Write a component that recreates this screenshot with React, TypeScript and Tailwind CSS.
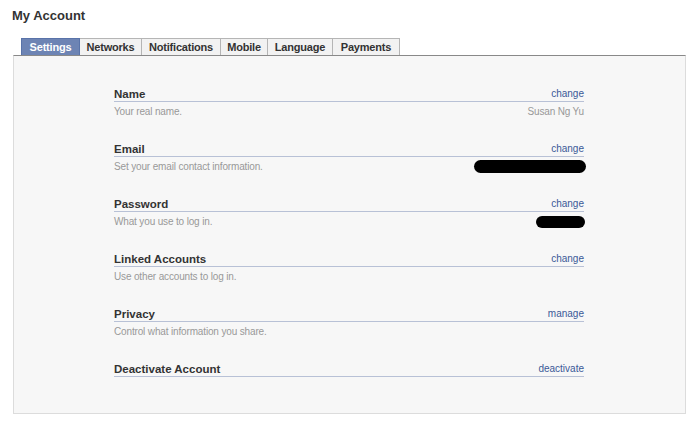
const tabs = [
  { label: 'Settings', w: 'w-[59px]' },
  { label: 'Networks', w: 'w-[62px]' },
  { label: 'Notifications', w: 'w-[79px]' },
  { label: 'Mobile', w: 'w-[47px]' },
  { label: 'Language', w: 'w-[65px]' },
  { label: 'Payments', w: 'w-[67px]' },
]

interface Row {
  title: string
  desc?: string
  action: string
  value?: React.ReactNode
}

const rows: Row[] = [
  { title: 'Name', desc: 'Your real name.', action: 'change', value: <span className="text-[#999]">Susan Ng Yu</span> },
  {
    title: 'Email',
    desc: 'Set your email contact information.',
    action: 'change',
    value: <span className="block w-[112px] h-[13px] bg-black rounded-full mr-[-2px]" />,
  },
  {
    title: 'Password',
    desc: 'What you use to log in.',
    action: 'change',
    value: <span className="block w-[49px] h-[12px] bg-black rounded-full mr-[-1px]" />,
  },
  { title: 'Linked Accounts', desc: 'Use other accounts to log in.', action: 'change' },
  { title: 'Privacy', desc: 'Control what information you share.', action: 'manage' },
  { title: 'Deactivate Account', action: 'deactivate' },
]

export default function App() {
  return (
    <div className="w-[700px] h-[424px] bg-white px-[12px] pt-[8px] font-['Liberation_Sans',Arial,sans-serif] text-[11px] text-[#333]">
      <h1 className="text-[13px] leading-[16px] font-bold text-[#333]">My Account</h1>

      <div className="mt-[14px] flex pl-[9px]">
        {tabs.map((t, i) => (
          <div
            key={t.label}
            className={
              i === 0
                ? `${t.w} h-[17px] text-center leading-[16px] font-bold tracking-[-0.2px] bg-[#6d84b4] text-white border border-[#5973a9] border-b-0`
                : `${t.w} h-[17px] text-center leading-[16px] font-bold tracking-[-0.2px] bg-[#f2f2f2] text-[#333] border border-[#b5b5b5] border-l-0 border-b-0`
            }
          >
            {t.label}
          </div>
        ))}
      </div>

      <div className="ml-[1px] w-[673px] h-[359px] bg-[#f7f7f7] border-t border-t-[#898989] border-x border-x-[#dcdcdc] border-b border-b-[#dcdcdc] pt-[31px]">
        <div className="w-[470px] ml-[100px]">
          {rows.map((r) => (
            <div key={r.title} className="mb-[23px]">
              <div className="flex justify-between items-end h-[15px] border-b border-[#b8c1d6]">
                <span className="font-bold text-[11.5px] text-[#333] leading-[14px]">{r.title}</span>
                <span className="text-[#3b5998] leading-[14px] text-[10px]">{r.action}</span>
              </div>
              <div className="flex justify-between items-center h-[17px] pt-[2px] text-[10px] tracking-[-0.15px] text-[#999]">
                <span>{r.desc}</span>
                {r.value}
              </div>
            </div>
          ))}
        </div>
      </div>
    </div>
  )
}
